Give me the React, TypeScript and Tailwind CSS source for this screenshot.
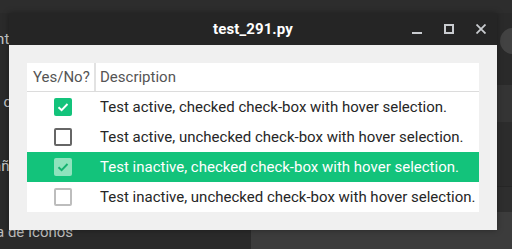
import React from "react";

type Row = { checked: boolean; active: boolean; selected: boolean; text: string };

const rows: Row[] = [
  { checked: true, active: true, selected: false, text: "Test active, checked check-box with hover selection." },
  { checked: false, active: true, selected: false, text: "Test active, unchecked check-box with hover selection." },
  { checked: true, active: false, selected: true, text: "Test inactive, checked check-box with hover selection." },
  { checked: false, active: false, selected: false, text: "Test inactive, unchecked check-box with hover selection." },
];

function Box({ checked, active }: { checked: boolean; active: boolean }) {
  if (checked) {
    return (
      <div
        className={
          "w-[18px] h-[18px] rounded-[2px] flex items-center justify-center " +
          (active ? "bg-[#13c37b]" : "bg-[#8fe3bd]")
        }
      >
        <svg width="14" height="14" viewBox="0 0 14 14">
          <path
            d="M2.5 7.2 L5.6 10.2 L11.5 4"
            fill="none"
            stroke={active ? "#ffffff" : "#13b370"}
            strokeWidth="1.9"
          />
        </svg>
      </div>
    );
  }
  return (
    <div
      className={
        "w-[18px] h-[18px] rounded-[2px] border-2 bg-white " +
        (active ? "border-[#666666]" : "border-[#bdbdbd]")
      }
    />
  );
}

export default function App() {
  return (
    <div
      className="relative w-[512px] h-[249px] overflow-hidden bg-[#2b2b2b]"
      style={{ fontFamily: "Roboto, 'Noto Sans', sans-serif" }}
    >
      {/* desktop background */}
      <div className="absolute inset-0 flex">
        <div className="w-[251px] h-full bg-[#2a2a2a] flex flex-col text-[15px] text-[#c8c8c8] whitespace-nowrap">
          <div className="h-[13px] bg-[#2d2d2d]" />
          <div className="ml-[-25px] mt-[17px] leading-[18px]">ment</div>
          <div className="ml-[-4px] mt-[45px] leading-[18px]">ı c</div>
          <div className="ml-[-7px] mt-[46px] leading-[18px]">añ</div>
          <div className="ml-[-4px] mt-[48px] leading-[18px] text-[#bdbdbd]">a de Iconos</div>
        </div>
        <div className="flex-1 h-full flex flex-col">
          <div className="h-[13px] bg-[#2d2d2d]" />
          <div className="h-[72px] bg-[#2a2a2a] flex justify-end items-start">
            <div className="mt-[15px] mr-[-14px] w-[26px] h-[26px] rounded-full bg-[#424242]" />
          </div>
          <div className="h-[37px] bg-[#343434]" />
          <div className="h-[65px] bg-[#2c2c2c] border-b border-[#262626]" />
          <div className="h-[25px] bg-[#2e2e2e]" />
          <div className="flex-1 bg-[#3c3c3c]" />
        </div>
      </div>

      {/* window */}
      <div className="absolute left-[9px] top-[13px] w-[488px] h-[217px] flex flex-col shadow-[0_0_6px_rgba(0,0,0,0.35)]">
        <div className="relative h-[32px] bg-[#252525] flex items-center justify-center">
          <span className="text-white font-bold text-[15px] tracking-[0.1px]">test_291.py</span>
          <div className="absolute right-[11px] top-0 h-full flex items-center">
            <svg width="10" height="10" viewBox="0 0 10 10" className="mr-[22px]">
              <path d="M0 9 H10" stroke="#c9ccd0" strokeWidth="2" />
            </svg>
            <svg width="10" height="10" viewBox="0 0 10 10" className="mr-[22px]">
              <rect x="1" y="1" width="8" height="8" fill="none" stroke="#c9ccd0" strokeWidth="2" />
            </svg>
            <svg width="10" height="10" viewBox="0 0 10 10">
              <path d="M0.5 0.5 L9.5 9.5 M9.5 0.5 L0.5 9.5" stroke="#c9ccd0" strokeWidth="1.8" />
            </svg>
          </div>
        </div>
        <div className="flex-1 bg-[#f0f0f0] p-[18px]">
          <div className="bg-white h-full flex flex-col text-[15px] whitespace-nowrap">
            <div className="h-[29px] flex border-b border-[#dcdcdc] text-[#555555]">
              <div className="w-[69px] border-r-2 border-[#e2e2e2] flex items-center pl-[6px]">Yes/No?</div>
              <div className="flex items-center pl-[4px]">Description</div>
            </div>
            {rows.map((r, i) => (
              <div
                key={i}
                className={
                  "h-[30px] flex items-center " +
                  (r.selected ? "bg-[#13c37b] text-white" : "text-[#262626]")
                }
              >
                <div className="w-[71px] flex justify-center">
                  <Box checked={r.checked} active={r.active} />
                </div>
                <div className="pl-[2px]">{r.text}</div>
              </div>
            ))}
          </div>
        </div>
      </div>
    </div>
  );
}
